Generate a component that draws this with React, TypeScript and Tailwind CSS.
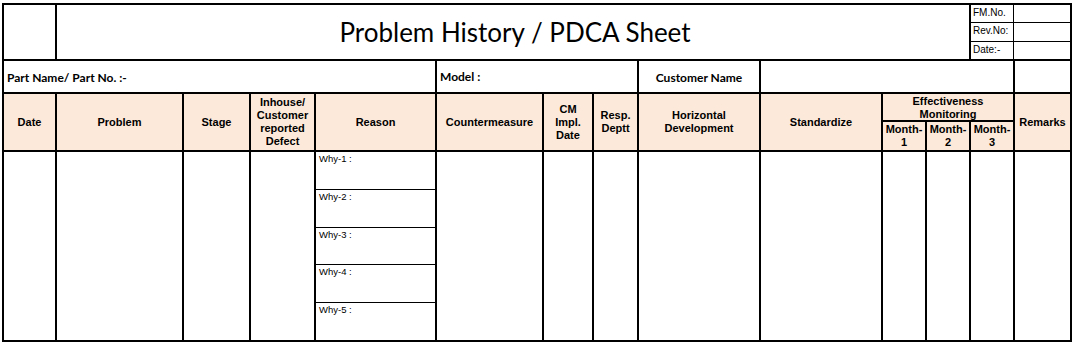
import React from 'react'

const headerCell =
  "flex items-center justify-center bg-[#fde9d9] text-center text-[11px] font-bold leading-[13px] text-black"

const bodyCols = [1, 2, 3, 4, 7, 8, 9, 10, 11, 12, 13, 14]

export default function App() {
  return (
    <div className="min-h-screen bg-white font-['Liberation_Sans',sans-serif] text-black">
      <div className="ml-[2px] mt-[3px] grid w-fit grid-cols-[51px_125px_65px_63px_119px_105px_48px_43px_120px_120px_42px_42px_42px_55px] grid-rows-[54px_31px_26px_28px_188px] gap-[2px] bg-black p-[2px]">
        {/* title row */}
        <div className="bg-white" />
        <div className="col-span-11 flex items-center justify-center bg-white pt-[1px] pl-[4px] font-['Lato',sans-serif] text-[26px] text-black">
          Problem History / PDCA Sheet
        </div>
        <div className="col-span-2 flex flex-col bg-white text-[10px] leading-none">
          {['FM.No.', 'Rev.No:', 'Date:-'].map((label, i) => (
            <div key={label} className={`flex flex-1 ${i < 2 ? 'border-b border-black' : ''}`}>
              <div className="w-[43px] border-r border-black pl-[2px] pt-[3px]">{label}</div>
              <div className="flex-1" />
            </div>
          ))}
        </div>

        {/* part row */}
        <div className="col-span-5 flex items-center bg-white pl-[3px] pt-[2px] font-['Lato',sans-serif] text-[12px] font-bold">
          Part Name/ Part No. :-
        </div>
        <div className="col-span-3 flex items-center bg-white pl-[3px] font-['Lato',sans-serif] text-[12px] font-bold">
          Model :
        </div>
        <div className="flex items-center justify-center bg-white pt-[3px] font-['Lato',sans-serif] text-[12px] font-bold">
          Customer Name
        </div>
        <div className="col-span-4 bg-white" />
        <div className="bg-white" />

        {/* header */}
        <div className={`row-span-2 ${headerCell}`}>Date</div>
        <div className={`row-span-2 ${headerCell}`}>Problem</div>
        <div className={`row-span-2 ${headerCell}`}>Stage</div>
        <div className={`row-span-2 ${headerCell}`}>
          Inhouse/
          <br />
          Customer
          <br />
          reported
          <br />
          Defect
        </div>
        <div className={`row-span-2 ${headerCell}`}>Reason</div>
        <div className={`row-span-2 ${headerCell}`}>Countermeasure</div>
        <div className={`row-span-2 ${headerCell} leading-[13.5px]`}>
          CM
          <br />
          Impl.
          <br />
          Date
        </div>
        <div className={`row-span-2 ${headerCell}`}>
          Resp.
          <br />
          Deptt
        </div>
        <div className={`row-span-2 ${headerCell}`}>
          Horizontal
          <br />
          Development
        </div>
        <div className={`row-span-2 ${headerCell}`}>Standardize</div>
        <div className={`col-span-3 ${headerCell} pt-[1px] leading-[12px]`}>
          Effectiveness
          <br />
          Monitoring
        </div>
        <div className={`row-span-2 ${headerCell}`}>Remarks</div>
        {[1, 2, 3].map((m) => (
          <div key={m} className={`${headerCell} leading-[12px]`}>
            Month-
            <br />
            {m}
          </div>
        ))}

        {/* body */}
        {bodyCols.map((c) => (
          <BodyCell key={c} col={c} />
        ))}
      </div>
    </div>
  )
}

function BodyCell({ col }: { col: number }) {
  if (col === 4) {
    return (
      <>
        <div className="bg-white" />
        <div className="flex flex-col bg-white">
          {[1, 2, 3, 4, 5].map((n) => (
            <div key={n} className={`flex-1 pl-[3px] pt-[1px] text-[9.5px] leading-[11px] ${n < 5 ? 'border-b border-black' : ''}`}>
              Why-{n} :
            </div>
          ))}
        </div>
        <div className="bg-white" />
      </>
    )
  }
  return <div className="bg-white" />
}
